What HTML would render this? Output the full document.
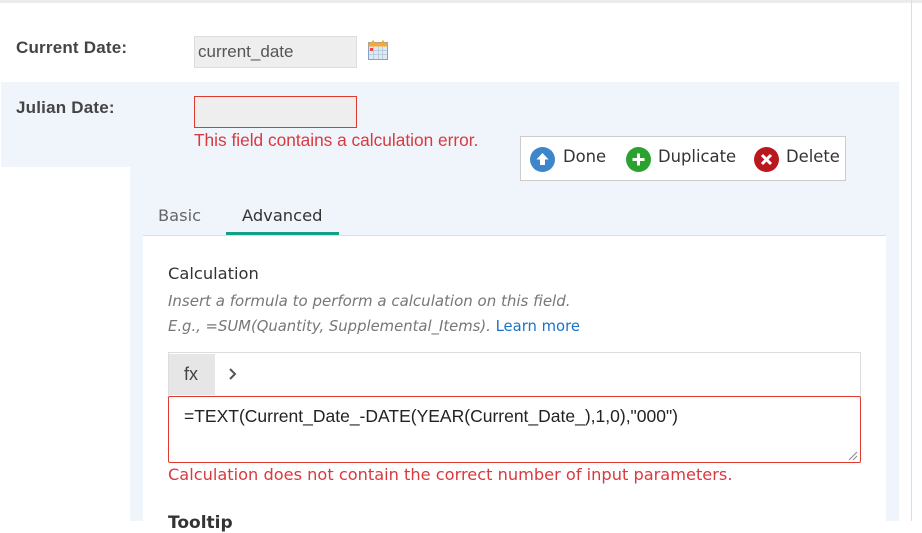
<!DOCTYPE html>
<html><head><style>
body{margin:0;width:922px;height:521px;overflow:hidden;background:#fff;font-family:"Liberation Sans",sans-serif;position:relative}
.a{position:absolute}
.os{font-family:"DejaVu Sans","Liberation Sans",sans-serif}
</style></head><body>
<div class="a" style="left:0;top:0;width:922px;height:3px;background:#ececec"></div>
<div class="a" style="left:911px;top:0;width:1px;height:521px;background:#ddd"></div>
<div class="a" style="left:1px;top:82px;width:898px;height:439px;background:#f0f5fc"></div>
<div class="a" style="left:0;top:167px;width:130px;height:354px;background:#fff"></div>
<div class="a" style="left:143px;top:235px;width:743px;height:286px;background:#fff;border-top:1px solid #ddd"></div>

<div class="a" style="left:16px;top:38px;font-weight:bold;font-size:17px;color:#444;letter-spacing:0.2px">Current Date:</div>
<div class="a" style="left:194px;top:36px;width:161px;height:30px;background:#eee;border:1px solid #ddd"></div>
<div class="a" style="left:198px;top:42px;font-size:17px;color:#555">current_date</div>
<svg class="a" style="left:368px;top:40px" width="20" height="20" viewBox="0 0 20 20">
<rect x="0.5" y="2.5" width="19" height="17" fill="#dde9f3" stroke="#7fa6c6"/>
<rect x="0.5" y="2.5" width="19" height="4" fill="#f5a833"/>
<rect x="4" y="0.5" width="2" height="4" fill="#f5a833"/><rect x="14" y="0.5" width="2" height="4" fill="#f5a833"/>
<g stroke="#b8cde0" stroke-width="1"><line x1="1" y1="10.5" x2="19" y2="10.5"/><line x1="1" y1="14.5" x2="19" y2="14.5"/><line x1="5.5" y1="7" x2="5.5" y2="19"/><line x1="10.5" y1="7" x2="10.5" y2="19"/><line x1="14.5" y1="7" x2="14.5" y2="19"/></g>
<rect x="2" y="8" width="3" height="3" fill="#e44"/>
</svg>

<div class="a" style="left:16px;top:98px;font-weight:bold;font-size:17px;color:#444;letter-spacing:0.2px">Julian Date:</div>
<div class="a" style="left:194px;top:96px;width:161px;height:30px;background:#eee;border:1px solid #e0392e"></div>
<div class="a" style="left:194px;top:130px;font-size:17.3px;color:#d9393e">This field contains a calculation error.</div>

<div class="a os" style="left:520px;top:136px;width:324px;height:43px;background:#fff;border:1px solid #ccc;font-size:16.4px;color:#333">
<svg class="a" style="left:9px;top:10px" width="25" height="25" viewBox="0 0 25 25"><circle cx="12.5" cy="12.5" r="12.5" fill="#3d86c9"/><path d="M12.5 6L6.5 12.5H10V18H15V12.5H18.5Z" fill="#fff"/></svg>
<span class="a" style="left:42px;top:10px">Done</span>
<svg class="a" style="left:105px;top:10px" width="25" height="25" viewBox="0 0 25 25"><circle cx="12.5" cy="12.5" r="12.5" fill="#2ba12f"/><path d="M12.5 6.5V18.5M6.5 12.5H18.5" stroke="#fff" stroke-width="3"/></svg>
<span class="a" style="left:137px;top:10px">Duplicate</span>
<svg class="a" style="left:233px;top:10px" width="25" height="25" viewBox="0 0 25 25"><circle cx="12.5" cy="12.5" r="12.5" fill="#b8191e"/><path d="M8 8L17 17M17 8L8 17" stroke="#fff" stroke-width="3"/></svg>
<span class="a" style="left:265px;top:10px">Delete</span>
</div>

<div class="a os" style="left:158px;top:206px;font-size:16.3px;color:#666">Basic</div>
<div class="a os" style="left:242px;top:206px;font-size:16.3px;color:#333">Advanced</div>
<div class="a" style="left:226px;top:232px;width:113px;height:3px;background:#14a085"></div>

<div class="a os" style="left:168px;top:264px;font-size:16.3px;color:#333">Calculation</div>
<div class="a os" style="left:168px;top:292px;font-size:15px;color:#777;font-style:italic">Insert a formula to perform a calculation on this field.</div>
<div class="a os" style="left:168px;top:318px;font-size:14.8px;color:#777"><i>E.g., =SUM(Quantity, Supplemental_Items).</i> <span style="color:#1a73c9">Learn more</span></div>

<div class="a" style="left:168px;top:352px;width:691px;height:44px;border:1px solid #ddd;border-bottom:none;background:#fff"></div>
<div class="a" style="left:169px;top:354px;width:46px;height:41px;background:#e6e6e6"></div>
<div class="a" style="left:184px;top:364px;font-size:18px;color:#444">fx</div>
<svg class="a" style="left:228px;top:367px" width="10" height="14" viewBox="0 0 10 14"><path d="M2 2L7 7L2 12" stroke="#555" stroke-width="2" fill="none"/></svg>
<div class="a" style="left:168px;top:396px;width:691px;height:65px;border:1px solid #e0392e;border-radius:2px;background:#fff"></div>
<div class="a" style="left:184px;top:406px;font-size:17.5px;color:#222">=TEXT(Current_Date_-DATE(YEAR(Current_Date_),1,0),"000")</div>
<svg class="a" style="left:848px;top:451px" width="10" height="10"><path d="M1 9L9 1M5 9L9 5" stroke="#888"/></svg>
<div class="a os" style="left:168px;top:465px;font-size:16.2px;color:#d9393e">Calculation does not contain the correct number of input parameters.</div>
<div class="a os" style="left:168px;top:513px;font-size:17px;color:#333;font-weight:bold">Tooltip</div>
</body></html>
